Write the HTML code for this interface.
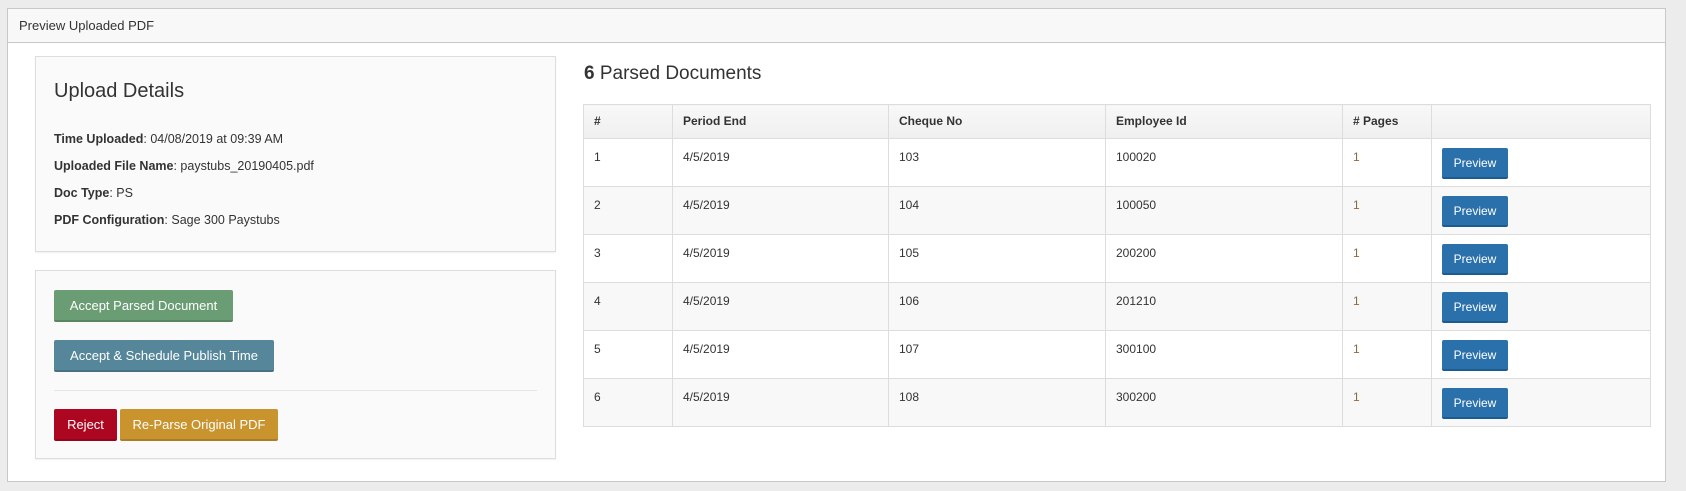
<!DOCTYPE html>
<html><head><meta charset="utf-8"><style>
*{box-sizing:border-box;margin:0;padding:0}
body{width:1686px;height:491px;background:#ececec;font-family:"Liberation Sans",sans-serif;color:#333;font-size:13px;position:relative;overflow:hidden}
.a{position:absolute}
.panel{left:7px;top:8px;width:1659px;height:474px;background:#fff;border:1px solid #c8c8c8}
.ph{left:0;top:0;width:100%;height:34px;background:#f8f8f8;border-bottom:1px solid #c8c8c8;padding:9px 11px;font-size:13px;color:#333}
.box{background:#fafafa;border:1px solid #ddd;box-shadow:0 1px 1px rgba(0,0,0,.06)}
.btn{position:absolute;color:#fff;font-size:13px;text-align:center;border-radius:2px;border-bottom:2px solid rgba(0,0,0,.15)}
table{border-collapse:collapse;position:absolute;left:583px;top:104px;width:1068px;table-layout:fixed}
td,th{border:1px solid #ddd;text-align:left;vertical-align:top;padding:9px 10px;font-size:12px}
th{height:34px;background:linear-gradient(#f8f8f8,#efefef);font-weight:bold;color:#333}
td{height:48px;padding-top:11px;padding-bottom:0}
tr:nth-child(odd) td{background:#f8f8f8}
tr:nth-child(even) td{background:#fff}
td.p{color:#8a6d3b}
.pv{display:inline-block;background:#2a70ab;color:#fff;width:66px;height:31px;line-height:31px;text-align:center;border-radius:2px;border-bottom:2px solid #1d5a8e;margin-top:-2px;font-size:12px;vertical-align:top}
</style></head><body>
<div class="a panel">
<div class="a ph">Preview Uploaded PDF</div>
</div>
<div class="a box" style="left:35px;top:56px;width:521px;height:196px"></div>
<div class="a" style="left:54px;top:80px;font-size:20px;color:#333">Upload Details</div>
<div class="a" style="left:54px;top:126px;line-height:27px;font-size:12.5px">
<div><b>Time Uploaded</b>: 04/08/2019 at 09:39 AM</div>
<div><b>Uploaded File Name</b>: paystubs_20190405.pdf</div>
<div><b>Doc Type</b>: PS</div>
<div><b>PDF Configuration</b>: Sage 300 Paystubs</div>
</div>
<div class="a box" style="left:35px;top:270px;width:521px;height:189px"></div>
<div class="btn" style="left:54px;top:290px;width:179px;height:32px;line-height:32px;background:#6b9d74">Accept Parsed Document</div>
<div class="btn" style="left:54px;top:340px;width:220px;height:32px;line-height:32px;background:#55869a">Accept &amp; Schedule Publish Time</div>
<div class="a" style="left:54px;top:390px;width:483px;height:1px;background:#e6e6e6"></div>
<div class="btn" style="left:54px;top:409px;width:63px;height:32px;line-height:32px;background:#ad0620">Reject</div>
<div class="btn" style="left:120px;top:409px;width:158px;height:32px;line-height:32px;background:#c9932d">Re-Parse Original PDF</div>
<div class="a" style="left:584px;top:63px;font-size:19px"><b>6</b> Parsed Documents</div>
<table>
<colgroup><col style="width:89px"><col style="width:216px"><col style="width:217px"><col style="width:237px"><col style="width:89px"><col></colgroup>
<tr><th>#</th><th>Period End</th><th>Cheque No</th><th>Employee Id</th><th># Pages</th><th></th></tr>
<tr><td>1</td><td>4/5/2019</td><td>103</td><td>100020</td><td class="p">1</td><td><span class="pv">Preview</span></td></tr>
<tr><td>2</td><td>4/5/2019</td><td>104</td><td>100050</td><td class="p">1</td><td><span class="pv">Preview</span></td></tr>
<tr><td>3</td><td>4/5/2019</td><td>105</td><td>200200</td><td class="p">1</td><td><span class="pv">Preview</span></td></tr>
<tr><td>4</td><td>4/5/2019</td><td>106</td><td>201210</td><td class="p">1</td><td><span class="pv">Preview</span></td></tr>
<tr><td>5</td><td>4/5/2019</td><td>107</td><td>300100</td><td class="p">1</td><td><span class="pv">Preview</span></td></tr>
<tr><td>6</td><td>4/5/2019</td><td>108</td><td>300200</td><td class="p">1</td><td><span class="pv">Preview</span></td></tr>
</table>
</body></html>
